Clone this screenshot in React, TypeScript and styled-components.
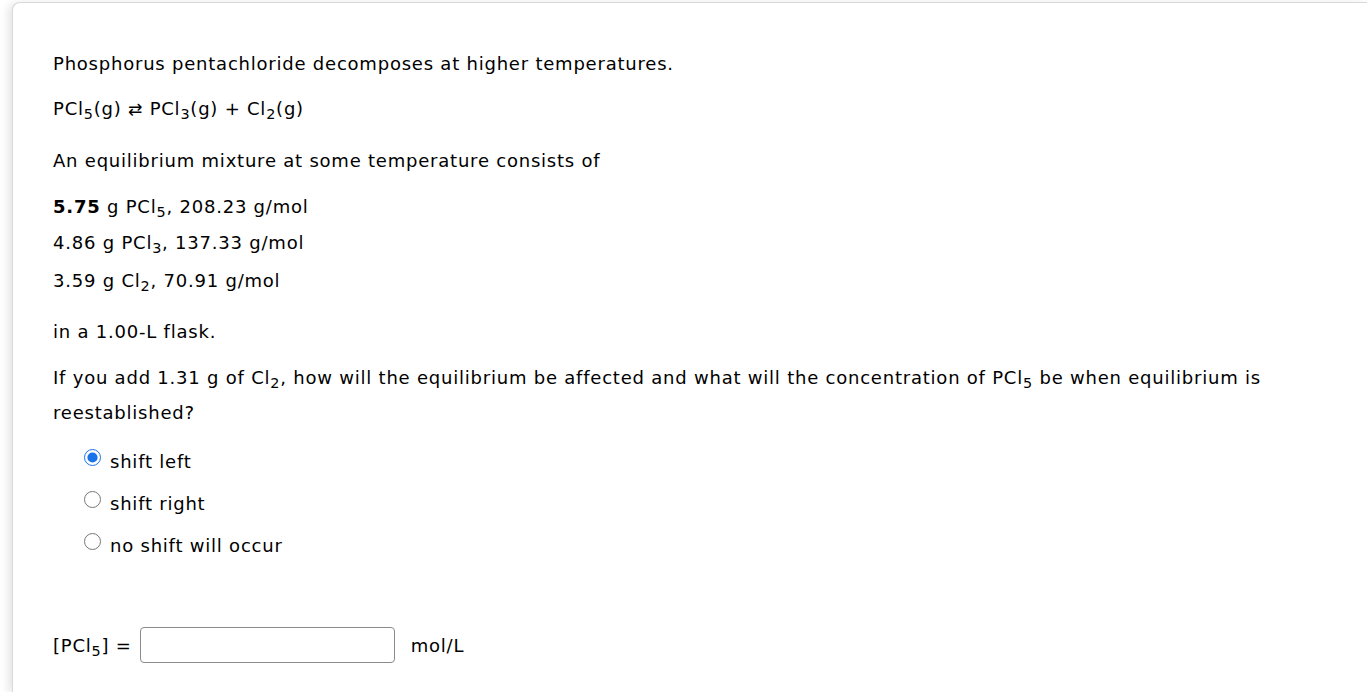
import React from "react";
import styled, { createGlobalStyle } from "styled-components";

const Global = createGlobalStyle`
  html, body {
    margin: 0;
    background: #ffffff;
    overflow: hidden;
  }
`;

const Page = styled.div`
  padding: 2px 0 0 12px;
  height: 692px;
  box-sizing: border-box;
`;

const Card = styled.div`
  background: #ffffff;
  border: 1px solid #d9d9d9;
  border-right: none;
  border-bottom: none;
  border-top-left-radius: 8px;
  box-shadow: -4px 1px 8px rgba(0, 0, 0, 0.1);
  height: 100%;
  padding: 43px 0 0 40px;
  box-sizing: border-box;
  color: #000000;
  font-family: "DejaVu Sans", Verdana, sans-serif;
  font-size: 18px;
  letter-spacing: 0.78px;
`;

const Para = styled.div<{ $gap?: number }>`
  line-height: 36px;
  margin-top: ${(p) => p.$gap ?? 0}px;
  max-width: 1260px;
`;

const Question = styled(Para)`
  line-height: 35px;
`;

const Sub = styled.sub`
  font-size: 0.8em;
  line-height: 0;
  vertical-align: -0.3em;
`;

const Arrow = styled.span`
  font-size: 0.95em;
`;

const Options = styled.div`
  display: flex;
  flex-direction: column;
  gap: 8px;
  margin: 15px 0 0 30px;
`;

const Option = styled.label`
  display: flex;
  align-items: flex-start;
  gap: 9px;
  line-height: 34px;
`;

const Radio = styled.input`
  width: 17px;
  height: 17px;
  margin: 4px 0 0 1px;
  accent-color: #1a73e8;
`;

const AnswerRow = styled.div`
  display: flex;
  align-items: center;
  margin-top: 64px;
`;

const Field = styled.input`
  width: 255px;
  height: 36px;
  box-sizing: border-box;
  border: 1px solid #8a8a8a;
  border-radius: 4px;
  margin: 0 16px 0 8px;
  font-family: inherit;
  font-size: 16px;
`;

const options = ["shift left", "shift right", "no shift will occur"];

const App: React.FC = () => {
  return (
    <>
      <Global />
      <Page>
        <Card>
          <Para>Phosphorus pentachloride decomposes at higher temperatures.</Para>
          <Para $gap={9}>
            PCl<Sub>5</Sub>(g) <Arrow>⇄</Arrow> PCl<Sub>3</Sub>(g) + Cl<Sub>2</Sub>(g)
          </Para>
          <Para $gap={16}>An equilibrium mixture at some temperature consists of</Para>
          <Para $gap={10}>
            <b>5.75</b> g PCl<Sub>5</Sub>, 208.23 g/mol
          </Para>
          <Para>
            4.86 g PCl<Sub>3</Sub>, 137.33 g/mol
          </Para>
          <Para $gap={2}>
            3.59 g Cl<Sub>2</Sub>, 70.91 g/mol
          </Para>
          <Para $gap={15}>in a 1.00-L flask.</Para>
          <Question $gap={10}>
            If you add 1.31 g of Cl<Sub>2</Sub>, how will the equilibrium be affected and what will the
            concentration of PCl<Sub>5</Sub> be when equilibrium is reestablished?
          </Question>
          <Options>
            {options.map((o, i) => (
              <Option key={o}>
                <Radio type="radio" name="shift" defaultChecked={i === 0} />
                {o}
              </Option>
            ))}
          </Options>
          <AnswerRow>
            <span>
              [PCl<Sub>5</Sub>] =
            </span>
            <Field type="text" />
            <span>mol/L</span>
          </AnswerRow>
        </Card>
      </Page>
    </>
  );
};

export default App;
